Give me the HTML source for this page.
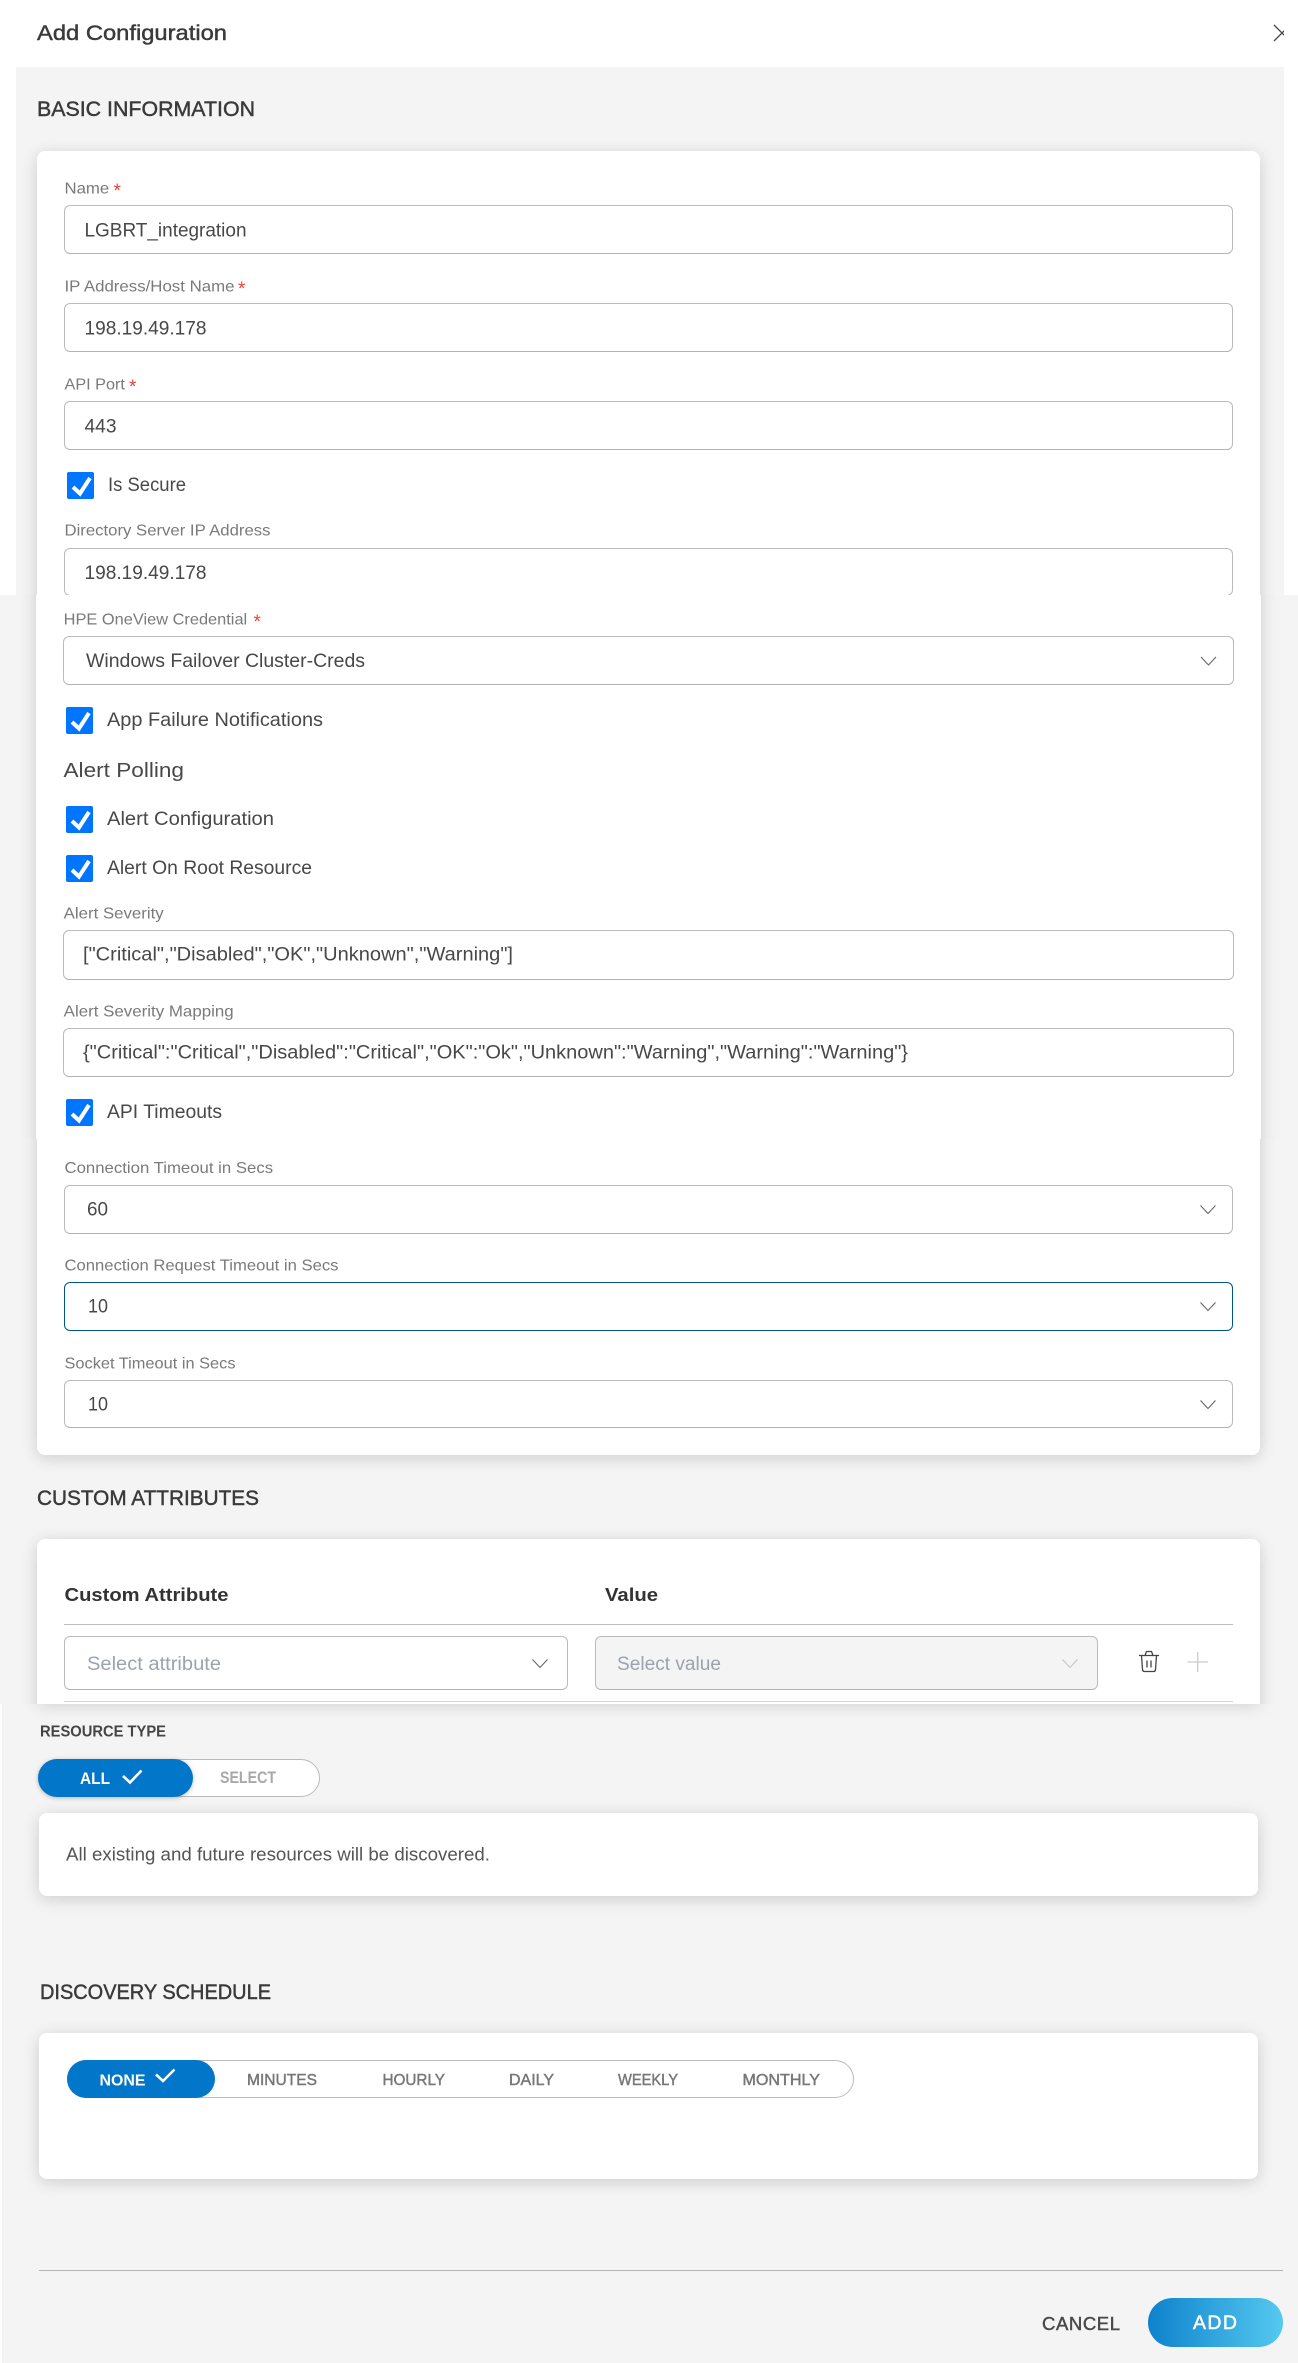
<!DOCTYPE html>
<html>
<head>
<meta charset="utf-8">
<title>Add Configuration</title>
<style>
html,body{margin:0;padding:0;background:#fff}
#page{position:relative;width:1298px;height:2363px;overflow:hidden;background:#fff}
.sec{position:absolute;left:0;top:0;width:1298px;height:2363px}
.s1{clip-path:inset(0 0 1768px 0);background:#fff}
.s2{clip-path:inset(595px 0 1224px 0);background:#f4f4f4}
.s3{clip-path:inset(1139px 0 659px 0);background:#f4f4f4}
.s4{clip-path:inset(1704px 0 0 2px);background:#f4f4f4}
.a{position:absolute;box-sizing:border-box}
.card{position:absolute;background:#fff;border-radius:8px;box-shadow:0 3px 16px rgba(0,0,0,.16)}
.in{position:absolute;box-sizing:border-box;background:#fff;border:1px solid #bbb;border-bottom-color:#b4b4b4;border-radius:6px;left:64px;width:1169px;height:48.5px}
svg{position:absolute;left:0;top:0}
text{font-family:"Liberation Sans",Arial,sans-serif}
</style>
</head>
<body>
<div id="page">
  <div class="sec s1">
    <div class="a" style="left:16px;top:67px;width:1268px;height:600px;background:#f4f4f4"></div>
    <div class="card" style="left:37px;top:151px;width:1223px;height:600px"></div>
    <div class="in" style="top:205px"></div>
    <div class="in" style="top:303px"></div>
    <div class="in" style="top:401px"></div>
    <div class="in" style="top:547.5px"></div>
  </div>
  <div class="sec s2">
    <div class="card" style="left:36px;top:500px;width:1225px;height:760px;border-radius:0"></div>
    <div class="in" style="top:635.5px;left:63px;width:1171px;height:49px"></div>
    <div class="in" style="top:930px;left:63px;width:1171px;height:49.5px"></div>
    <div class="in" style="top:1028px;left:63px;width:1171px;height:49px"></div>
  </div>
  <div class="sec s3">
    <div class="card" style="left:37px;top:1050px;width:1223px;height:405px"></div>
    <div class="in" style="top:1184.5px;height:49px"></div>
    <div class="in" style="top:1282px;border:1.5px solid #00558c"></div>
    <div class="in" style="top:1380px;height:48px"></div>
    <div class="card" style="left:37px;top:1539px;width:1223px;height:300px"></div>
    <div class="a" style="left:64px;top:1624px;width:1169px;height:1px;background:#bdbdbd"></div>
    <div class="in" style="top:1636px;width:503.5px;height:53.5px"></div>
    <div class="in" style="top:1636px;left:595px;width:503px;height:53.5px;background:#f4f4f4"></div>
    <div class="a" style="left:64px;top:1701px;width:1169px;height:1px;background:#ccd6e0"></div>
  </div>
  <div class="sec s4">
    <div class="a" style="left:37px;top:1660px;width:1223px;height:44px;box-shadow:0 3px 16px rgba(0,0,0,.12)"></div>
    <div class="a" style="left:38px;top:1759px;width:282px;height:38px;background:#fff;border:1px solid #bbb;border-radius:19px"></div>
    <div class="a" style="left:38px;top:1759px;width:155px;height:38px;background:#0277c9;border-radius:19px;box-shadow:0 1px 5px rgba(0,0,0,.25)"></div>
    <div class="card" style="left:39px;top:1813px;width:1219px;height:83px"></div>
    <div class="card" style="left:39px;top:2033px;width:1219px;height:146px"></div>
    <div class="a" style="left:66.5px;top:2060px;width:787px;height:37.5px;background:#fff;border:1px solid #bbb;border-radius:19px"></div>
    <div class="a" style="left:66.5px;top:2060px;width:148px;height:37.5px;background:#0277c9;border-radius:19px"></div>
    <div class="a" style="left:39px;top:2269.5px;width:1244px;height:1.5px;background:#b5b5b5"></div>
    <div class="a" style="left:1148px;top:2298px;width:135px;height:49px;border-radius:25px;background:linear-gradient(90deg,#0e82cc,#55c9ef)"></div>
  </div>

  <svg width="1298" height="2363" viewBox="0 0 1298 2363" xmlns="http://www.w3.org/2000/svg">
    <!-- close icon -->
    <clipPath id="cc"><rect x="1260" y="15" width="24" height="35"/></clipPath>
    <g clip-path="url(#cc)" stroke="#444" stroke-width="1.3" fill="none"><path d="M1274 25L1290 41M1274 41L1290 25"/></g>

    <!-- headings -->
    <g font-size="21.5" fill="#3a3a3a" stroke="#3a3a3a" stroke-width=".45">
      <text x="37" y="40" textLength="190" lengthAdjust="spacingAndGlyphs">Add Configuration</text>
      <text x="37" y="116" textLength="218" lengthAdjust="spacingAndGlyphs">BASIC INFORMATION</text>
      <text x="37" y="1505" textLength="222" lengthAdjust="spacingAndGlyphs">CUSTOM ATTRIBUTES</text>
      <text x="40" y="1999" textLength="231" lengthAdjust="spacingAndGlyphs">DISCOVERY SCHEDULE</text>
    </g>

    <!-- labels -->
    <g font-size="16" fill="#7a7a7a">
      <text x="64.5" y="193.5" textLength="44.7" lengthAdjust="spacingAndGlyphs">Name</text>
      <text x="64.5" y="291.500" textLength="170" lengthAdjust="spacingAndGlyphs">IP Address/Host Name</text>
      <text x="64.5" y="389.500" textLength="60.4" lengthAdjust="spacingAndGlyphs">API Port</text>
      <text x="64.5" y="535.500" textLength="206" lengthAdjust="spacingAndGlyphs">Directory Server IP Address</text>
      <text x="63.7" y="624.500" textLength="183.5" lengthAdjust="spacingAndGlyphs">HPE OneView Credential</text>
      <text x="63.7" y="918.500" textLength="100" lengthAdjust="spacingAndGlyphs">Alert Severity</text>
      <text x="63.7" y="1016.500" textLength="170" lengthAdjust="spacingAndGlyphs">Alert Severity Mapping</text>
      <text x="64.5" y="1173" textLength="208.6" lengthAdjust="spacingAndGlyphs">Connection Timeout in Secs</text>
      <text x="64.5" y="1270.500" textLength="274" lengthAdjust="spacingAndGlyphs">Connection Request Timeout in Secs</text>
      <text x="64.5" y="1368.500" textLength="171" lengthAdjust="spacingAndGlyphs">Socket Timeout in Secs</text>
    </g>
    <g font-size="19" fill="#e8413c">
      <text x="113.500" y="197">*</text>
      <text x="238" y="295">*</text>
      <text x="129" y="393">*</text>
      <text x="253.500" y="628">*</text>
    </g>

    <!-- input values -->
    <g font-size="19.5" fill="#484848">
      <text x="84.5" y="236.5" textLength="162" lengthAdjust="spacingAndGlyphs">LGBRT_integration</text>
      <text x="84.5" y="334.5" textLength="122" lengthAdjust="spacingAndGlyphs">198.19.49.178</text>
      <text x="84.5" y="432.5" textLength="32" lengthAdjust="spacingAndGlyphs">443</text>
      <text x="84.5" y="579" textLength="122" lengthAdjust="spacingAndGlyphs">198.19.49.178</text>
      <text x="86" y="667" textLength="279" lengthAdjust="spacingAndGlyphs">Windows Failover Cluster-Creds</text>
      <text x="83" y="960.5" textLength="430" lengthAdjust="spacingAndGlyphs">["Critical","Disabled","OK","Unknown","Warning"]</text>
      <text x="83" y="1058.5" textLength="825" lengthAdjust="spacingAndGlyphs">{"Critical":"Critical","Disabled":"Critical","OK":"Ok","Unknown":"Warning","Warning":"Warning"}</text>
      <text x="87" y="1215.5" textLength="21" lengthAdjust="spacingAndGlyphs">60</text>
      <text x="88" y="1312.5" textLength="20" lengthAdjust="spacingAndGlyphs">10</text>
      <text x="88" y="1410.5" textLength="20" lengthAdjust="spacingAndGlyphs">10</text>
      <!-- checkbox labels -->
      <text x="108" y="491" textLength="78" lengthAdjust="spacingAndGlyphs">Is Secure</text>
      <text x="107" y="726" textLength="216" lengthAdjust="spacingAndGlyphs">App Failure Notifications</text>
      <text x="107" y="825" textLength="167" lengthAdjust="spacingAndGlyphs">Alert Configuration</text>
      <text x="107" y="874" textLength="205" lengthAdjust="spacingAndGlyphs">Alert On Root Resource</text>
      <text x="107" y="1118" textLength="115" lengthAdjust="spacingAndGlyphs">API Timeouts</text>
    </g>
    <text x="63.5" y="777" font-size="20.5" fill="#484848" textLength="120.5" lengthAdjust="spacingAndGlyphs">Alert Polling</text>

    <!-- checkboxes -->
    <g>
      <rect x="67" y="472" width="27" height="27" rx="2" fill="#0075ff"/>
      <path d="M73 487L80 493.500L90 478" fill="none" stroke="#fff" stroke-width="4"/>
      <rect x="66" y="707" width="27" height="27" rx="2" fill="#0075ff"/>
      <path d="M72 722L79 728.500L89 713" fill="none" stroke="#fff" stroke-width="4"/>
      <rect x="66" y="806" width="27" height="27" rx="2" fill="#0075ff"/>
      <path d="M72 821L79 827.500L89 812" fill="none" stroke="#fff" stroke-width="4"/>
      <rect x="66" y="855" width="27" height="27" rx="2" fill="#0075ff"/>
      <path d="M72 870L79 876.500L89 861" fill="none" stroke="#fff" stroke-width="4"/>
      <rect x="66" y="1099" width="27" height="27" rx="2" fill="#0075ff"/>
      <path d="M72 1114L79 1120.500L89 1105" fill="none" stroke="#fff" stroke-width="4"/>
    </g>

    <!-- chevrons -->
    <g fill="none" stroke="#666" stroke-width="1.1">
      <path d="M1201 657L1208.500 665L1216 657"/>
      <path d="M1200.500 1205.500L1208 1213.500L1215.500 1205.500"/>
      <path d="M1200.500 1302.500L1208 1310.500L1215.500 1302.500"/>
      <path d="M1200.500 1400.500L1208 1408.500L1215.500 1400.500"/>
      <path d="M532.500 1659.500L540 1667.500L547.500 1659.500"/>
    </g>
    <path d="M1062.500 1659.500L1070 1667.500L1077.500 1659.500" fill="none" stroke="#c4c4c4" stroke-width="1.1"/>

    <!-- custom attributes -->
    <g font-size="18" fill="#333" font-weight="bold">
      <text x="64.5" y="1601" textLength="164" lengthAdjust="spacingAndGlyphs">Custom Attribute</text>
      <text x="605" y="1601" textLength="53" lengthAdjust="spacingAndGlyphs">Value</text>
    </g>
    <g font-size="19" fill="#9ba3ad">
      <text x="87" y="1670" textLength="134" lengthAdjust="spacingAndGlyphs">Select attribute</text>
      <text x="617" y="1670" textLength="104" lengthAdjust="spacingAndGlyphs">Select value</text>
    </g>
    <g fill="none" stroke="#444" stroke-width="1.300" stroke-linejoin="round" stroke-linecap="round">
      <path d="M1139.500 1655.500H1158.500"/>
      <path d="M1145 1655.500L1146.500 1651.500H1151.500L1153 1655.500"/>
      <path d="M1141.500 1655.500L1142.500 1669.500Q1142.700 1671.500 1144.500 1671.500H1153.500Q1155.300 1671.500 1155.500 1669.500L1156.500 1655.500"/>
      <path d="M1147 1661V1667M1151 1661V1667"/>
    </g>
    <path d="M1187.500 1662H1208M1197.700 1652V1672" fill="none" stroke="#ccc" stroke-width="1.300"/>

    <!-- resource type -->
    <text x="40" y="1736.500" font-size="15.500" font-weight="bold" fill="#444" textLength="126" lengthAdjust="spacingAndGlyphs">RESOURCE TYPE</text>
    <text x="80" y="1784" font-size="16.500" font-weight="bold" fill="#fff" textLength="30" lengthAdjust="spacingAndGlyphs">ALL</text>
    <path d="M123 1776L130 1782.500L141.500 1770.500" fill="none" stroke="#fff" stroke-width="2.600"/>
    <text x="220" y="1783" font-size="16.500" font-weight="bold" fill="#a8a8a8" textLength="56" lengthAdjust="spacingAndGlyphs">SELECT</text>
    <text x="66" y="1860.500" font-size="18.500" fill="#555" textLength="424" lengthAdjust="spacingAndGlyphs">All existing and future resources will be discovered.</text>

    <!-- discovery schedule -->
    <text x="99.500" y="2085.500" font-size="16" font-weight="bold" fill="#fff" textLength="46" lengthAdjust="spacingAndGlyphs">NONE</text>
    <path d="M156 2074.500L163 2081L174.500 2069.500" fill="none" stroke="#fff" stroke-width="2.600"/>
    <g font-size="16" fill="#777" stroke="#777" stroke-width=".45">
      <text x="247" y="2085" textLength="70" lengthAdjust="spacingAndGlyphs">MINUTES</text>
      <text x="382.500" y="2085" textLength="62.500" lengthAdjust="spacingAndGlyphs">HOURLY</text>
      <text x="509" y="2085" textLength="45" lengthAdjust="spacingAndGlyphs">DAILY</text>
      <text x="618" y="2085" textLength="60" lengthAdjust="spacingAndGlyphs">WEEKLY</text>
      <text x="742.500" y="2085" textLength="77.500" lengthAdjust="spacingAndGlyphs">MONTHLY</text>
    </g>

    <!-- footer -->
    <text x="1042" y="2330" font-size="18.500" fill="#4a4a4a" stroke="#4a4a4a" stroke-width=".45" textLength="78">CANCEL</text>
    <text x="1193" y="2329" font-size="19.500" fill="#fff" stroke="#fff" stroke-width=".5" textLength="44">ADD</text>
  </svg>
</div>
</body>
</html>
